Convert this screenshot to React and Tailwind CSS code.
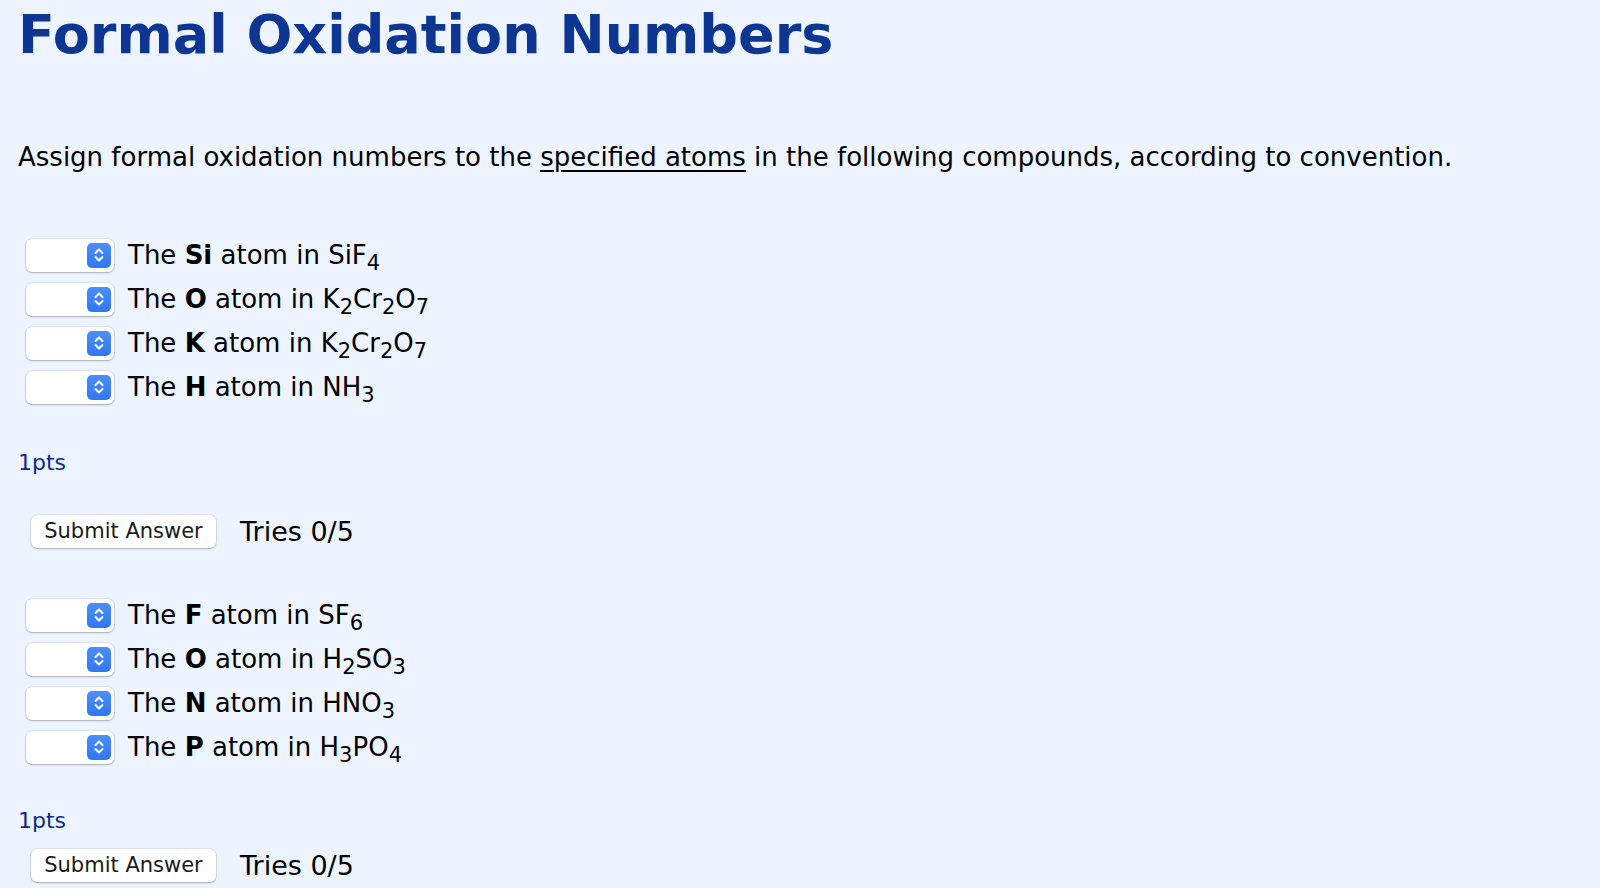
import { Fragment } from 'react';

const groupOne = [
    { atom: 'Si', formula: ['Si', 'F', ['4']] },
    { atom: 'O', formula: ['K', ['2'], 'Cr', ['2'], 'O', ['7']] },
    { atom: 'K', formula: ['K', ['2'], 'Cr', ['2'], 'O', ['7']] },
    { atom: 'H', formula: ['NH', ['3']] },
];

const groupTwo = [
    { atom: 'F', formula: ['SF', ['6']] },
    { atom: 'O', formula: ['H', ['2'], 'SO', ['3']] },
    { atom: 'N', formula: ['HNO', ['3']] },
    { atom: 'P', formula: ['H', ['3'], 'PO', ['4']] },
];

function Formula({ parts }) {
    return (
        <span>
            {parts.map((p, i) =>
                Array.isArray(p) ? (
                    <sub key={i} className="text-[21px] relative top-[6px] align-baseline">{p[0]}</sub>
                ) : (
                    <Fragment key={i}>{p}</Fragment>
                )
            )}
        </span>
    );
}

function FakeSelect() {
    return (
        <div className="w-[88px] h-[33px] bg-white rounded-[6px] shadow-[0_1px_2px_rgba(0,0,0,0.25),0_0_0_0.5px_rgba(0,0,0,0.12)] flex items-center justify-end pr-[3px]">
            <div className="w-[24px] h-[25px] rounded-[5px] bg-gradient-to-b from-[#4a90fa] to-[#2f76f2] flex items-center justify-center">
                <svg width="12" height="18" viewBox="0 0 12 18" fill="none" stroke="white" strokeWidth="2" strokeLinecap="round" strokeLinejoin="round">
                    <path d="M2.5 7 L6 3.5 L9.5 7" />
                    <path d="M2.5 11 L6 14.5 L9.5 11" />
                </svg>
            </div>
        </div>
    );
}

function Question({ rows }) {
    return (
        <div className="flex flex-col pl-[8px]">
            {rows.map((r, i) => (
                <div key={i} className="flex items-center gap-[14px] h-[44px]">
                    <FakeSelect />
                    <span className="text-[26px] text-black leading-none">
                        The <b>{r.atom}</b> atom in <Formula parts={r.formula} />
                    </span>
                </div>
            ))}
        </div>
    );
}

function SubmitRow() {
    return (
        <div className="flex items-center gap-[24px] pl-[13px]">
            <button className="w-[185px] h-[33px] bg-white rounded-[6px] shadow-[0_1px_2px_rgba(0,0,0,0.25),0_0_0_0.5px_rgba(0,0,0,0.12)] text-[21px] text-[#1a1a1a] leading-none">
                Submit Answer
            </button>
            <span className="text-[27px] text-black leading-none">Tries 0/5</span>
        </div>
    );
}

export default function App() {
    return (
        <div className="min-h-screen bg-[#edf4ff] px-[18px] font-['Verdana','DejaVu_Sans',sans-serif]">
            <h1 className="text-[54px] font-bold text-[#0d3592] leading-none pt-[8px]">Formal Oxidation Numbers</h1>

            <p className="text-[26px] text-black leading-none mt-[82px]">
                Assign formal oxidation numbers to the <span className="underline underline-offset-[4px]">specified atoms</span> in the following compounds, according to convention.
            </p>

            <div className="mt-[63px]">
                <Question rows={groupOne} />
            </div>

            <div className="text-[22px] text-[#0b2a8a] leading-none mt-[43px]">1pts</div>

            <div className="mt-[41px]">
                <SubmitRow />
            </div>

            <div className="mt-[45px]">
                <Question rows={groupTwo} />
            </div>

            <div className="text-[22px] text-[#0b2a8a] leading-none mt-[41px]">1pts</div>

            <div className="mt-[17px]">
                <SubmitRow />
            </div>
        </div>
    );
}
